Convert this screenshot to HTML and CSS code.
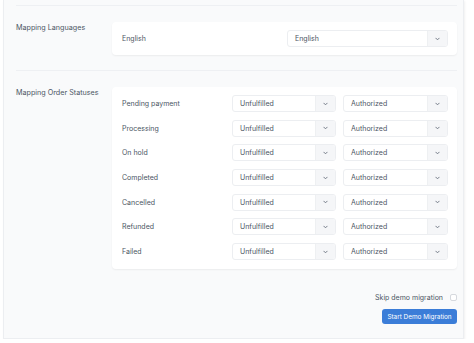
FILE: index.html
```html
<!DOCTYPE html>
<html lang="en">
<head>
    <meta charset="UTF-8">
    <meta name="viewport" content="width=device-width, initial-scale=1.0">
    <title>Demo Migration</title>
    <link rel="stylesheet" href="styles.css">
</head>
<body>

    <div class="panel">

        <!-- Idiomas -->
        <div class="seccion">
            <div class="seccion__titulo">Mapping Languages</div>
            <div class="tarjeta tarjeta--idioma">
                <span class="fila__nombre">English</span>
                <div class="select select--ancho">
                    <span class="select__valor">English</span>
                    <span class="select__boton"><svg width="5" height="4" viewBox="0 0 6 4"><polyline points="1,1 3,3 5,1" fill="none" stroke="#6b7280" stroke-width="1.1" stroke-linecap="round" stroke-linejoin="round"/></svg></span>
                </div>
            </div>
        </div>

        <!-- Estados de pedido -->
        <div class="seccion">
            <div class="seccion__titulo">Mapping Order Statuses</div>
            <div class="tarjeta tarjeta--estados" id="estados"></div>
        </div>

        <div class="pie">
            <label class="omitir">Skip demo migration <span class="check"></span></label>
            <button class="boton">Start Demo Migration</button>
        </div>
    </div>

    <script>
        const estados = ['Pending payment', 'Processing', 'On hold', 'Completed', 'Cancelled', 'Refunded', 'Failed'];
        const chevron = '<svg width="5" height="4" viewBox="0 0 6 4"><polyline points="1,1 3,3 5,1" fill="none" stroke="#6b7280" stroke-width="1.1" stroke-linecap="round" stroke-linejoin="round"/></svg>';
        const contenedor = document.getElementById('estados');

        estados.forEach(nombre => {
            const fila = document.createElement('div');
            fila.className = 'fila';
            fila.innerHTML =
                '<span class="fila__nombre">' + nombre + '</span>' +
                '<div class="select"><span class="select__valor">Unfulfilled</span><span class="select__boton">' + chevron + '</span></div>' +
                '<div class="select"><span class="select__valor">Authorized</span><span class="select__boton">' + chevron + '</span></div>';
            contenedor.appendChild(fila);
        });
    </script>

</body>
</html>
```

FILE: styles.css
```css
* {
    box-sizing: border-box;
}
body {
    font-family: Inter, "Noto Sans", sans-serif;
    font-size: 7px;
    color: #4b5563;
    background-color: #fff;
    margin: 0;
}

.panel {
    margin-left: 3px;
    width: 461px;
    height: 339px;
    background-color: #f9fafb;
    border: 1px solid #eceef1;
    border-top: none;
    box-shadow: 1px 1px 2px rgba(0,0,0,0.06);
    padding: 5px 6px 0 12px;
}

.seccion {
    display: flex;
    border-top: 1px solid #eef0f3;
    padding: 16px 0 15px;
}

.seccion__titulo {
    width: 96px;
    flex-shrink: 0;
    color: #4b5563;
    font-size: 7.2px;
    padding-top: 1px;
}

.tarjeta {
    flex: 1;
    background-color: #fff;
    border-radius: 4px;
    box-shadow: 0 1px 2px rgba(0,0,0,0.06);
}

.tarjeta--idioma {
    display: flex;
    justify-content: space-between;
    align-items: center;
    padding: 8px 9px 8px 10px;
}

.tarjeta--estados {
    display: flex;
    flex-direction: column;
    gap: 7.7px;
    padding: 8px 9px 9px 10px;
}

.fila {
    display: grid;
    grid-template-columns: 1fr 104px 105px;
    column-gap: 7px;
    align-items: center;
}

.fila__nombre {
    color: #4b5563;
}

.select {
    display: flex;
    height: 17px;
    border: 1px solid #eceef1;
    border-radius: 3px;
    background-color: #fff;
    overflow: hidden;
}

.select--ancho {
    width: 161px;
}

.select__valor {
    flex: 1;
    display: flex;
    align-items: center;
    padding-left: 7px;
}

.select__boton {
    width: 20px;
    display: flex;
    justify-content: center;
    align-items: center;
    background-color: #f5f6f8;
    border-left: 1px solid #eef0f2;
}

.pie {
    display: flex;
    flex-direction: column;
    align-items: flex-end;
    gap: 7px;
    padding-top: 9px;
}

.omitir {
    display: flex;
    align-items: center;
    gap: 7px;
}

.check {
    width: 7px;
    height: 7px;
    border: 1px solid #d6d9de;
    border-radius: 2px;
    background-color: #fff;
}

.boton {
    font-family: inherit;
    font-size: 6.4px;
    background-color: #3b7dd8;
    color: #fff;
    border: none;
    border-radius: 3px;
    width: 75px;
    height: 15px;
    padding: 0;
    cursor: pointer;
}
```
